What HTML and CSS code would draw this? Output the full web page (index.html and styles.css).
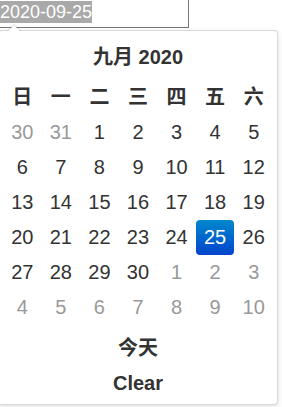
FILE: index.html
```html
<!DOCTYPE html>
<html lang="zh">
<head>
<meta charset="UTF-8">
<meta name="viewport" content="width=device-width, initial-scale=1.0">
<title>Datepicker</title>
<link rel="stylesheet" href="styles.css">
</head>
<body>

<div class="field"><span class="field-sel">2020-09-25</span></div>

<div class="picker">
    <table class="cal">
        <thead>
            <tr class="cal-title"><th colspan="7">九月 2020</th></tr>
            <tr class="cal-dow">
                <th>日</th><th>一</th><th>二</th><th>三</th><th>四</th><th>五</th><th>六</th>
            </tr>
        </thead>
        <tbody>
            <tr><td class="old">30</td><td class="old">31</td><td>1</td><td>2</td><td>3</td><td>4</td><td>5</td></tr>
            <tr><td>6</td><td>7</td><td>8</td><td>9</td><td>10</td><td>11</td><td>12</td></tr>
            <tr><td>13</td><td>14</td><td>15</td><td>16</td><td>17</td><td>18</td><td>19</td></tr>
            <tr><td>20</td><td>21</td><td>22</td><td>23</td><td>24</td><td><span class="active">25</span></td><td>26</td></tr>
            <tr><td>27</td><td>28</td><td>29</td><td>30</td><td class="old">1</td><td class="old">2</td><td class="old">3</td></tr>
            <tr><td class="old">4</td><td class="old">5</td><td class="old">6</td><td class="old">7</td><td class="old">8</td><td class="old">9</td><td class="old">10</td></tr>
        </tbody>
        <tfoot>
            <tr class="cal-today"><th colspan="7">今天</th></tr>
            <tr class="cal-clear"><th colspan="7">Clear</th></tr>
        </tfoot>
    </table>
</div>

</body>
</html>
```

FILE: styles.css
```css
body {
    margin: 0;
    padding: 0;
    font-family: "Liberation Sans", Arial, "Noto Sans CJK SC", sans-serif;
    background: #fff;
    overflow: hidden;
    height: 407px;
}
.field {
    box-sizing: border-box;
    width: 193px;
    height: 31px;
    margin: -3px 0 0 -4px;
    padding: 0 0 4px 4px;
    border: 1px solid #767676;
    display: flex;
    align-items: flex-end;
}
.field-sel {
    background-color: #a9a9a9;
    color: #fff;
    font-size: 18px;
    line-height: 22px;
    margin-left: -1px;
}
.picker {
    position: relative;
    box-sizing: border-box;
    width: 280px;
    margin: 2px 0 0 -2px;
    padding: 4px;
    background: #fff;
    border: 1px solid rgba(0, 0, 0, 0.15);
    border-radius: 4px;
    box-shadow: 0 2px 6px rgba(0, 0, 0, 0.12);
    color: #333;
}
.picker:before {
    content: '';
    position: absolute;
    top: -7px;
    left: 8px;
    border-left: 7px solid transparent;
    border-right: 7px solid transparent;
    border-bottom: 7px solid rgba(0, 0, 0, 0.15);
}
.picker:after {
    content: '';
    position: absolute;
    top: -6px;
    left: 9px;
    border-left: 6px solid transparent;
    border-right: 6px solid transparent;
    border-bottom: 6px solid #fff;
}
.cal {
    width: 100%;
    border-collapse: collapse;
    table-layout: fixed;
    font-size: 20px;
}
.cal th,
.cal td {
    padding: 0;
    text-align: center;
}
.cal th {
    font-weight: bold;
}
.cal-title th,
.cal-dow th {
    height: 40px;
}
.cal td {
    height: 35px;
}
.cal td.old {
    color: #999;
}
.cal .active {
    display: flex;
    align-items: center;
    justify-content: center;
    height: 35px;
    border-radius: 4px;
    color: #fff;
    background-image: linear-gradient(to bottom, #0088cc, #0044cc);
}
.cal-today th {
    height: 42px;
}
.cal-clear th {
    height: 33px;
}
```
